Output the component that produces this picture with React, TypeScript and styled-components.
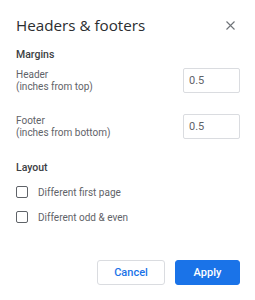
import React from "react";
import styled, { createGlobalStyle } from "styled-components";

const Global = createGlobalStyle`
  html, body { margin: 0; padding: 0; background: #fff; }
  body { font-family: Roboto, "Liberation Sans", Arial, sans-serif; }
`;

const Dialog = styled.div`
  width: 255px;
  height: 300px;
  box-sizing: border-box;
  padding: 15px 15px 0 16px;
  display: flex;
  flex-direction: column;
  background: #fff;
`;

const TitleRow = styled.div`
  display: flex;
  align-items: center;
  justify-content: space-between;
  height: 20px;
`;

const Title = styled.h1`
  margin: 0;
  font-family: "Open Sans", Roboto, sans-serif;
  font-size: 15.2px;
  font-weight: 400;
  color: #2b2d30;
  line-height: 20px;
`;

const Close = styled.button`
  border: 0;
  background: none;
  padding: 0;
  width: 16px;
  height: 16px;
  display: flex;
  align-items: center;
  justify-content: center;
  margin-right: 2px;
`;

const Section = styled.div<{ $top: number }>`
  font-size: 10.5px;
  font-weight: 500;
  color: #3c4043;
  line-height: 14px;
  margin-top: ${(p) => p.$top}px;
`;

const FieldRow = styled.div<{ $top: number }>`
  display: flex;
  align-items: center;
  justify-content: space-between;
  margin-top: ${(p) => p.$top}px;
`;

const Label = styled.div`
  font-size: 10px;
  color: #5f6368;
  line-height: 12px;
`;

const Input = styled.div`
  width: 57px;
  height: 25px;
  box-sizing: border-box;
  border: 1px solid #dadce0;
  border-radius: 2px;
  font-size: 11px;
  color: #5f6368;
  display: flex;
  align-items: center;
  padding-left: 5px;
`;

const CheckRow = styled.label<{ $top: number }>`
  display: flex;
  align-items: center;
  gap: 10px;
  height: 14px;
  margin-top: ${(p) => p.$top}px;
  font-size: 10px;
  color: #5f6368;
`;

const Box = styled.span`
  width: 12px;
  height: 12px;
  box-sizing: border-box;
  border: 1.5px solid #5f6368;
  border-radius: 2px;
  display: inline-block;
`;

const Buttons = styled.div`
  display: flex;
  justify-content: flex-end;
  gap: 10px;
  margin-top: auto;
  margin-bottom: 15px;
`;

const Btn = styled.button<{ $primary?: boolean }>`
  height: 25px;
  box-sizing: border-box;
  border-radius: 3px;
  font-family: Roboto, "Liberation Sans", Arial, sans-serif;
  font-size: 11px;
  font-weight: 500;
  padding: 0;
  width: ${(p) => (p.$primary ? 65 : 68)}px;
  border: 1px solid ${(p) => (p.$primary ? "#1a73e8" : "#dadce0")};
  background: ${(p) => (p.$primary ? "#1a73e8" : "#fff")};
  color: ${(p) => (p.$primary ? "#fff" : "#1a73e8")};
`;

export default function App() {
  return (
    <>
      <Global />
      <Dialog>
        <TitleRow>
          <Title>Headers &amp; footers</Title>
          <Close aria-label="Close">
            <svg width="9" height="9" viewBox="0 0 9 9">
              <path d="M0.5 0.5 L8.5 8.5 M8.5 0.5 L0.5 8.5" stroke="#6f7378" strokeWidth="1.1" />
            </svg>
          </Close>
        </TitleRow>
        <Section $top={13}>Margins</Section>
        <FieldRow $top={6}>
          <Label>
            Header
            <br />
            (inches from top)
          </Label>
          <Input>0.5</Input>
        </FieldRow>
        <FieldRow $top={21}>
          <Label>
            Footer
            <br />
            (inches from bottom)
          </Label>
          <Input>0.5</Input>
        </FieldRow>
        <Section $top={22}>Layout</Section>
        <CheckRow $top={10}>
          <Box />
          Different first page
        </CheckRow>
        <CheckRow $top={11}>
          <Box />
          Different odd &amp; even
        </CheckRow>
        <Buttons>
          <Btn>Cancel</Btn>
          <Btn $primary>Apply</Btn>
        </Buttons>
      </Dialog>
    </>
  );
}
